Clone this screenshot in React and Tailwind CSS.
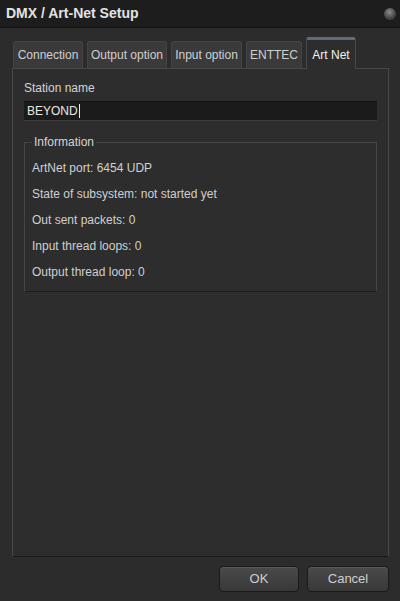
import React from "react";

const font = { fontFamily: '"Liberation Sans", Arial, sans-serif' };

function Tab({ label, w, active }) {
  if (active) {
    return (
      <div
        className={`${w} h-[32px] -mb-px relative z-10 flex items-start justify-center pt-[6px] rounded-t-[3px] bg-[#2d2d2d] border-x border-[#474747] border-t-[3px] border-t-[#5d6b7e] text-[12px] text-[#f2f2f2]`}
      >
        {label}
      </div>
    );
  }
  return (
    <div
      className={`${w} h-[27px] flex items-center justify-center rounded-t-[3px] bg-[#3a3a3a] border-x border-t border-[#444444] text-[12px] text-[#d0d0d0]`}
    >
      {label}
    </div>
  );
}

export default function App() {
  const lines = [
    "ArtNet port: 6454 UDP",
    "State of subsystem: not started yet",
    "Out sent packets: 0",
    "Input thread loops: 0",
    "Output thread loop: 0",
  ];
  return (
    <div style={font} className="w-[400px] h-[601px] bg-[#2c2c2c] flex flex-col overflow-hidden">
      <div className="h-[28px] shrink-0 bg-[#1d1d1d] border-b border-[#141414] flex items-center justify-between pl-[6px] pr-[4px]">
        <span className="text-[14px] font-bold text-[#e2e2e2]">DMX / Art-Net Setup</span>
        <div className="w-[12px] h-[12px] rounded-full bg-[radial-gradient(circle_at_45%_35%,#8c8c8c,#4a4a4a_55%,#2a2a2a)]" />
      </div>
      <div className="flex-1 flex flex-col pl-[12px] pr-[11px] pt-[10px]">
        <div className="flex items-end gap-[4px] pl-[1px] h-[30px]">
          <Tab label="Connection" w="w-[70px]" />
          <Tab label="Output option" w="w-[80px]" />
          <Tab label="Input option" w="w-[71px]" />
          <Tab label="ENTTEC" w="w-[56px]" />
          <Tab label="Art Net" w="w-[50px]" active />
        </div>
        <div className="h-[489px] bg-[#2d2d2d] border border-[#474747] border-b-[#1a1a1a] pl-[11px] pr-[11px] pt-[12px]">
          <div className="text-[12px] text-[#d4d4d4] leading-[14px]">Station name</div>
          <div className="mt-[6px] h-[20px] bg-[#1b1b1b] border-t border-[#111] border-b border-b-[#3d3d3d] flex items-center pl-[3px] text-[12px] text-[#e8e8e8]">
            BEYOND<span className="w-px h-[14px] bg-[#e8e8e8] ml-px" />
          </div>
          <fieldset className="mt-[14px] h-[157px] border border-[#454545] border-b-[#1f1f1f] pl-[7px] pt-[6px]">
            <legend className="ml-0 px-[2px] text-[12px] text-[#d4d4d4] leading-[14px]">Information</legend>
            <div className="flex flex-col">
              {lines.map((l) => (
                <div key={l} className="h-[26px] leading-[26px] text-[12px] text-[#d0d0d0]">
                  {l}
                </div>
              ))}
            </div>
          </fieldset>
        </div>
        <div className="flex justify-end gap-[8px] pt-[9px]">
          <button className="w-[80px] h-[26px] rounded-[4px] border border-[#1a1a1a] bg-[linear-gradient(#4a4a4a,#383838)] shadow-[inset_0_1px_0_#5a5a5a] text-[13px] text-[#cfcfcf]">
            OK
          </button>
          <button className="w-[82px] h-[26px] rounded-[4px] border border-[#1a1a1a] bg-[linear-gradient(#4a4a4a,#383838)] shadow-[inset_0_1px_0_#5a5a5a] text-[13px] text-[#cfcfcf]">
            Cancel
          </button>
        </div>
      </div>
    </div>
  );
}
